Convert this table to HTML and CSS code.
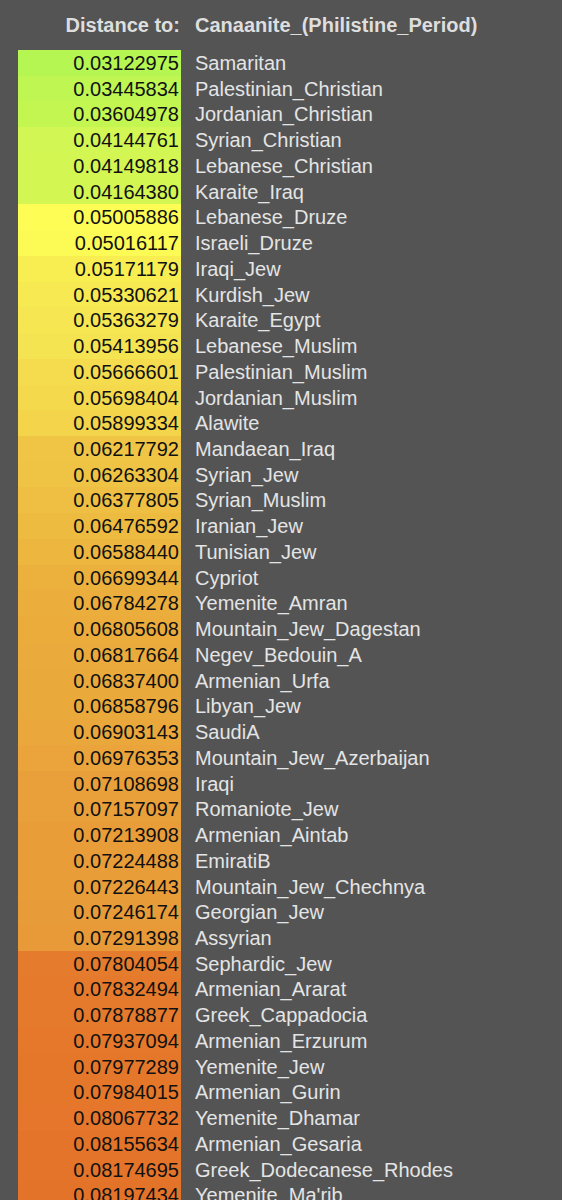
FILE: index.html
```html
<!DOCTYPE html>
<html>
<head>
<meta charset="utf-8">
<link rel="stylesheet" href="styles.css">
</head>
<body>
<div class="sheet">
  <div class="head">
    <div class="head-label">Distance to:</div>
    <div class="head-target">Canaanite_(Philistine_Period)</div>
  </div>
  <div class="rows">
    <div class="num" style="background:#b6f652">0.03122975</div><div class="name">Samaritan</div>
    <div class="num" style="background:#bff652">0.03445834</div><div class="name">Palestinian_Christian</div>
    <div class="num" style="background:#c4f652">0.03604978</div><div class="name">Jordanian_Christian</div>
    <div class="num" style="background:#d2f653">0.04144761</div><div class="name">Syrian_Christian</div>
    <div class="num" style="background:#d3f653">0.04149818</div><div class="name">Lebanese_Christian</div>
    <div class="num" style="background:#d4f653">0.04164380</div><div class="name">Karaite_Iraq</div>
    <div class="num" style="background:#fdfd55">0.05005886</div><div class="name">Lebanese_Druze</div>
    <div class="num" style="background:#fcfb55">0.05016117</div><div class="name">Israeli_Druze</div>
    <div class="num" style="background:#f8ee52">0.05171179</div><div class="name">Iraqi_Jew</div>
    <div class="num" style="background:#f7e952">0.05330621</div><div class="name">Kurdish_Jew</div>
    <div class="num" style="background:#f6e752">0.05363279</div><div class="name">Karaite_Egypt</div>
    <div class="num" style="background:#f5e451">0.05413956</div><div class="name">Lebanese_Muslim</div>
    <div class="num" style="background:#f5dc4e">0.05666601</div><div class="name">Palestinian_Muslim</div>
    <div class="num" style="background:#f4d94d">0.05698404</div><div class="name">Jordanian_Muslim</div>
    <div class="num" style="background:#f3d44b">0.05899334</div><div class="name">Alawite</div>
    <div class="num" style="background:#f0c545">0.06217792</div><div class="name">Mandaean_Iraq</div>
    <div class="num" style="background:#efc344">0.06263304</div><div class="name">Syrian_Jew</div>
    <div class="num" style="background:#eebf42">0.06377805</div><div class="name">Syrian_Muslim</div>
    <div class="num" style="background:#eebb41">0.06476592</div><div class="name">Iranian_Jew</div>
    <div class="num" style="background:#edb63f">0.06588440</div><div class="name">Tunisian_Jew</div>
    <div class="num" style="background:#ecb13d">0.06699344</div><div class="name">Cypriot</div>
    <div class="num" style="background:#ebad3c">0.06784278</div><div class="name">Yemenite_Amran</div>
    <div class="num" style="background:#ebac3c">0.06805608</div><div class="name">Mountain_Jew_Dagestan</div>
    <div class="num" style="background:#ebab3c">0.06817664</div><div class="name">Negev_Bedouin_A</div>
    <div class="num" style="background:#eaaa3b">0.06837400</div><div class="name">Armenian_Urfa</div>
    <div class="num" style="background:#eaa93b">0.06858796</div><div class="name">Libyan_Jew</div>
    <div class="num" style="background:#eaa73b">0.06903143</div><div class="name">SaudiA</div>
    <div class="num" style="background:#eaa43b">0.06976353</div><div class="name">Mountain_Jew_Azerbaijan</div>
    <div class="num" style="background:#e9a03a">0.07108698</div><div class="name">Iraqi</div>
    <div class="num" style="background:#e99f3a">0.07157097</div><div class="name">Romaniote_Jew</div>
    <div class="num" style="background:#e99d39">0.07213908</div><div class="name">Armenian_Aintab</div>
    <div class="num" style="background:#e99d39">0.07224488</div><div class="name">EmiratiB</div>
    <div class="num" style="background:#e99d39">0.07226443</div><div class="name">Mountain_Jew_Chechnya</div>
    <div class="num" style="background:#e89c39">0.07246174</div><div class="name">Georgian_Jew</div>
    <div class="num" style="background:#e89a38">0.07291398</div><div class="name">Assyrian</div>
    <div class="num" style="background:#e57b2c">0.07804054</div><div class="name">Sephardic_Jew</div>
    <div class="num" style="background:#e57a2c">0.07832494</div><div class="name">Armenian_Ararat</div>
    <div class="num" style="background:#e5792c">0.07878877</div><div class="name">Greek_Cappadocia</div>
    <div class="num" style="background:#e5782b">0.07937094</div><div class="name">Armenian_Erzurum</div>
    <div class="num" style="background:#e5772b">0.07977289</div><div class="name">Yemenite_Jew</div>
    <div class="num" style="background:#e5772b">0.07984015</div><div class="name">Armenian_Gurin</div>
    <div class="num" style="background:#e5762b">0.08067732</div><div class="name">Yemenite_Dhamar</div>
    <div class="num" style="background:#e4742a">0.08155634</div><div class="name">Armenian_Gesaria</div>
    <div class="num" style="background:#e4742a">0.08174695</div><div class="name">Greek_Dodecanese_Rhodes</div>
    <div class="num" style="background:#e4732a">0.08197434</div><div class="name">Yemenite_Ma'rib</div>
  </div>
</div>
</body>
</html>
```

FILE: styles.css
```css
html, body {
  margin: 0;
  padding: 0;
  background: #545454;
}
body {
  font-family: "Liberation Sans", Arial, sans-serif;
  font-size: 20px;
  overflow: hidden;
}
.sheet {
  padding-left: 18px;
}
.head {
  display: grid;
  grid-template-columns: 163px auto;
  column-gap: 14px;
  height: 50px;
  line-height: 50px;
  font-weight: bold;
  color: #dedede;
}
.head-label {
  text-align: right;
  padding-right: 1px;
}
.rows {
  display: grid;
  grid-template-columns: 163px auto;
  grid-auto-rows: 25.74px;
  column-gap: 14px;
}
.num {
  text-align: right;
  padding-right: 2px;
  color: #111;
  line-height: 26.5px;
}
.name {
  color: #e4e4e4;
  line-height: 26.5px;
  white-space: nowrap;
}
```
